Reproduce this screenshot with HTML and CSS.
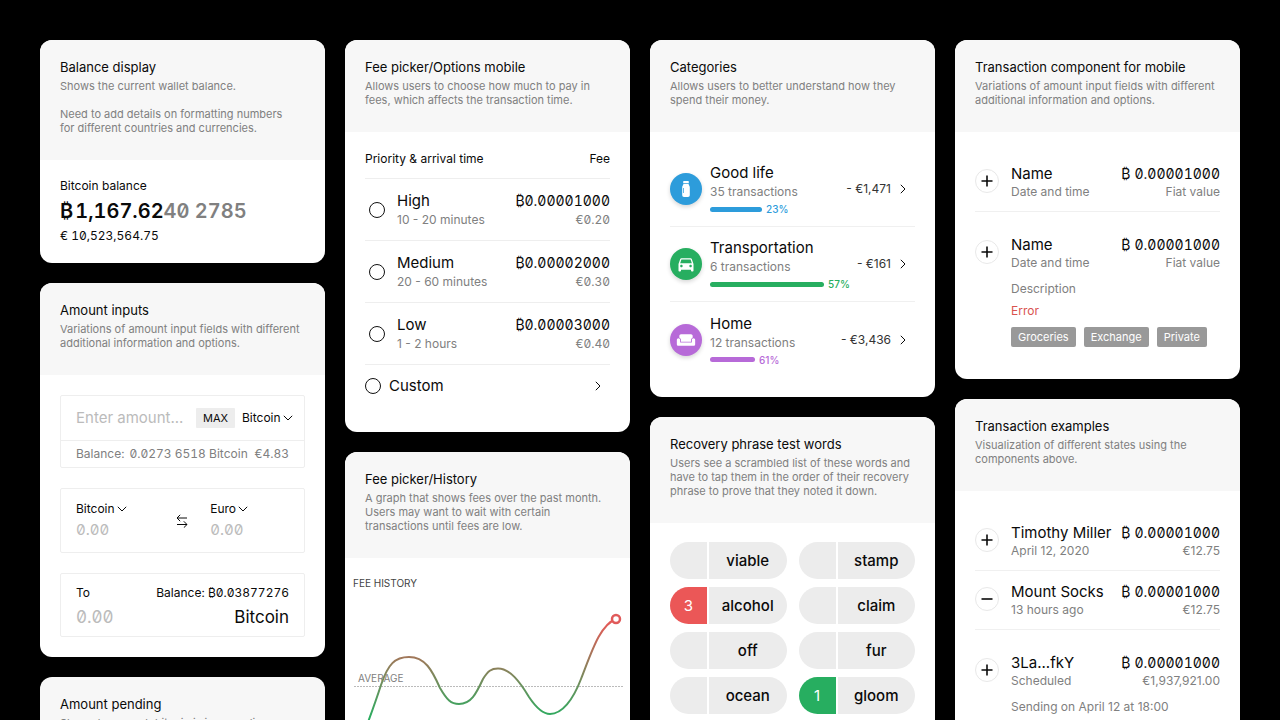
FILE: index.html
```html
<!DOCTYPE html>
<html lang="en">
<head>
<meta charset="utf-8">
<title>Wallet components</title>
<link rel="stylesheet" href="styles.css">
</head>
<body>
<svg class="sprite" aria-hidden="true">
  <symbol id="down" viewBox="0 0 10 6"><path d="M.8.8 5 5 9.2.8"/></symbol>
  <symbol id="next" viewBox="0 0 6 10"><path d="M.8.8 5 5 .8 9.2"/></symbol>
  <symbol id="plus" viewBox="0 0 12 12"><path d="M6 .5v11M.5 6h11"/></symbol>
  <symbol id="minus" viewBox="0 0 12 12"><path d="M.5 6h11"/></symbol>
</svg>
<main class="board">
  <div class="column">
    <section class="card">
      <header class="card-head">
        <h2>Balance display</h2>
        <p>Shows the current wallet balance.<br><br>Need to add details on formatting numbers<br>for different countries and currencies.</p>
      </header>
      <div class="balance">
        <div class="small">Bitcoin balance</div>
        <div class="total">₿<span class="total-main">1,167.62</span><span class="total-rest">40 2785</span></div>
        <div class="small num">€ 10,523,564.75</div>
      </div>
    </section>
    <section class="card">
      <header class="card-head">
        <h2>Amount inputs</h2>
        <p>Variations of amount input fields with different additional information and options.</p>
      </header>
      <div class="fields">
        <div class="field">
          <div class="field-entry">
            <input class="entry entry-wide" type="text" placeholder="Enter amount..." aria-label="Amount">
            <button class="max" type="button">MAX</button>
            <label class="picker"><select aria-label="Currency"><option>Bitcoin</option></select><svg class="icon down"><use href="#down"/></svg></label>
          </div>
          <div class="field-note num"><span>Balance:</span><span>0.0273 6518 Bitcoin</span><span class="end">€4.83</span></div>
        </div>
        <div class="field convert">
          <div class="side">
            <label class="picker"><select aria-label="From currency"><option>Bitcoin</option></select><svg class="icon down"><use href="#down"/></svg></label>
            <input class="entry num" type="text" placeholder="0.00" aria-label="From amount">
          </div>
          <button class="swap" type="button" aria-label="Swap currencies"><svg class="icon swap-icon" viewBox="0 0 12 14"><path d="M11 4H1M4.200.800 1 4l3.200 3.200M1 10.500h10M7.800 7.300 11 10.500 7.800 13.700"/></svg></button>
          <div class="side">
            <label class="picker"><select aria-label="To currency"><option>Euro</option></select><svg class="icon down"><use href="#down"/></svg></label>
            <input class="entry num" type="text" placeholder="0.00" aria-label="To amount">
          </div>
        </div>
        <div class="field send">
          <div class="line small"><label for="send-to">To</label><span class="num">Balance: ₿0.03877276</span></div>
          <div class="line large"><input id="send-to" class="entry large num" type="text" placeholder="0.00"><span>Bitcoin</span></div>
        </div>
      </div>
    </section>
    <section class="card">
      <header class="card-head">
        <h2>Amount pending</h2>
        <p>Shows how much bitcoin is in a pending transaction.</p>
      </header>
    </section>
  </div>

  <div class="column">
    <section class="card">
      <header class="card-head">
        <h2>Fee picker/Options mobile</h2>
        <p>Allows users to choose how much to pay in fees, which affects the transaction time.</p>
      </header>
      <div class="fees">
        <div class="fee-head small"><span>Priority &amp; arrival time</span><span>Fee</span></div>
        <label class="fee"><input type="radio" name="fee"><span class="pair"><b>High</b><i>10 - 20 minutes</i></span><span class="pair end num"><b>₿0.00001000</b><i>€0.20</i></span></label>
        <label class="fee"><input type="radio" name="fee"><span class="pair"><b>Medium</b><i>20 - 60 minutes</i></span><span class="pair end num"><b>₿0.00002000</b><i>€0.30</i></span></label>
        <label class="fee"><input type="radio" name="fee"><span class="pair"><b>Low</b><i>1 - 2 hours</i></span><span class="pair end num"><b>₿0.00003000</b><i>€0.40</i></span></label>
        <label class="fee-custom"><input type="radio" name="fee"><span>Custom</span><svg class="icon next end"><use href="#next"/></svg></label>
      </div>
    </section>
    <section class="card">
      <header class="card-head">
        <h2>Fee picker/History</h2>
        <p>A graph that shows fees over the past month. Users may want to wait with certain transactions until fees are low.</p>
      </header>
      <div class="history">
        <h3>FEE HISTORY</h3>
        <svg class="chart" viewBox="0 0 285 170" role="img" aria-label="Fee history">
          <defs><linearGradient id="heat" gradientUnits="userSpaceOnUse" x1="0" y1="27" x2="0" y2="128"><stop offset="0" stop-color="#eb5757"/><stop offset="1" stop-color="#27ae60"/></linearGradient></defs>
          <text x="13" y="90">AVERAGE</text>
          <path class="average" d="M9 94.500H278"/>
          <path class="curve" d="M10 166C17 145 26 124 36 93C43 72 50 65 64 65C80 65 87 78 95 96C102 108 106 112 114 112C126 112 131 102 138 87C143 79 146 76.500 153 76.500C165 76.500 175 90 184 105C192 117 198 122 205 122C217 122 228 108 236 87C247 59 255 33 271 27"/>
          <circle cx="271" cy="27" r="4"/>
        </svg>
      </div>
    </section>
  </div>

  <div class="column">
    <section class="card">
      <header class="card-head">
        <h2>Categories</h2>
        <p>Allows users to better understand how they spend their money.</p>
      </header>
      <div class="categories">
        <a class="category blue" href="#good-life">
          <span class="badge"><svg viewBox="0 0 20 20"><path d="M7.800 2h4.400a.6.6 0 0 1 .6.6v1.600H7.200V2.600a.6.6 0 0 1 .6-.6zM7.400 5h5.200c0 1.200 1.200 1.600 1.200 3.300v7.900a1.800 1.800 0 0 1-1.800 1.800H8a1.800 1.800 0 0 1-1.800-1.800V8.300C6.200 6.600 7.400 6.200 7.400 5zM7.200 9v5h.7V9z"/></svg></span>
          <span class="category-text"><b>Good life</b><i>35 transactions</i><span class="share"><span class="bar" style="width:52px"></span>23%</span></span>
          <span class="category-sum">- €1,471</span><svg class="icon next"><use href="#next"/></svg>
        </a>
        <a class="category green" href="#transportation">
          <span class="badge"><svg viewBox="0 0 24 24"><path d="M18.920 6.010C18.720 5.420 18.160 5 17.500 5h-11c-.66 0-1.210.42-1.420 1.010L3 12v8c0 .55.45 1 1 1h1c.55 0 1-.45 1-1v-1h12v1c0 .55.45 1 1 1h1c.55 0 1-.45 1-1v-8l-2.080-5.990zM6.500 16c-.83 0-1.500-.67-1.500-1.500S5.670 13 6.500 13s1.500.67 1.500 1.500S7.330 16 6.500 16zm11 0c-.83 0-1.500-.67-1.500-1.500s.67-1.500 1.500-1.500 1.500.67 1.500 1.500-.67 1.500-1.500 1.500zM5 11l1.500-4.500h11L19 11H5z"/></svg></span>
          <span class="category-text"><b>Transportation</b><i>6 transactions</i><span class="share"><span class="bar" style="width:114px"></span>57%</span></span>
          <span class="category-sum">- €161</span><svg class="icon next"><use href="#next"/></svg>
        </a>
        <a class="category purple" href="#home">
          <span class="badge"><svg viewBox="0 0 24 24"><path d="M21 10c-1.100 0-2 .9-2 2v3H5v-3c0-1.100-.9-2-2-2s-2 .9-2 2v5c0 1.100.9 2 2 2h18c1.100 0 2-.9 2-2v-5c0-1.100-.9-2-2-2zm-3-5H6c-1.100 0-2 .9-2 2v2.150c1.160.41 2 1.510 2 2.820V14h12v-2.030c0-1.300.84-2.400 2-2.820V7c0-1.100-.9-2-2-2z"/></svg></span>
          <span class="category-text"><b>Home</b><i>12 transactions</i><span class="share"><span class="bar" style="width:45px"></span>61%</span></span>
          <span class="category-sum">- €3,436</span><svg class="icon next"><use href="#next"/></svg>
        </a>
      </div>
    </section>
    <section class="card">
      <header class="card-head">
        <h2>Recovery phrase test words</h2>
        <p>Users see a scrambled list of these words and have to tap them in the order of their recovery phrase to prove that they noted it down.</p>
      </header>
      <div class="words">
        <button class="word" type="button"><span class="order"></span><span class="term">viable</span></button>
        <button class="word" type="button"><span class="order"></span><span class="term">stamp</span></button>
        <button class="word" type="button"><span class="order wrong">3</span><span class="term">alcohol</span></button>
        <button class="word" type="button"><span class="order"></span><span class="term">claim</span></button>
        <button class="word" type="button"><span class="order"></span><span class="term">off</span></button>
        <button class="word" type="button"><span class="order"></span><span class="term">fur</span></button>
        <button class="word" type="button"><span class="order"></span><span class="term">ocean</span></button>
        <button class="word" type="button"><span class="order right">1</span><span class="term">gloom</span></button>
      </div>
    </section>
  </div>

  <div class="column">
    <section class="card">
      <header class="card-head">
        <h2>Transaction component for mobile</h2>
        <p>Variations of amount input fields with different additional information and options.</p>
      </header>
      <div class="transactions">
        <article class="transaction">
          <span class="sign"><svg class="icon"><use href="#plus"/></svg></span>
          <div class="details">
            <div class="line"><b>Name</b><b class="coin">₿<span>0.00001000</span></b></div>
            <div class="line sub"><span>Date and time</span><span>Fiat value</span></div>
          </div>
        </article>
        <article class="transaction roomy">
          <span class="sign"><svg class="icon"><use href="#plus"/></svg></span>
          <div class="details">
            <div class="line"><b>Name</b><b class="coin">₿<span>0.00001000</span></b></div>
            <div class="line sub"><span>Date and time</span><span>Fiat value</span></div>
            <p class="note">Description</p>
            <p class="error">Error</p>
            <div class="tags"><span>Groceries</span><span>Exchange</span><span>Private</span></div>
          </div>
        </article>
      </div>
    </section>
    <section class="card">
      <header class="card-head">
        <h2>Transaction examples</h2>
        <p>Visualization of different states using the components above.</p>
      </header>
      <div class="transactions">
        <article class="transaction">
          <span class="sign"><svg class="icon"><use href="#plus"/></svg></span>
          <div class="details">
            <div class="line"><b>Timothy Miller</b><b class="coin">₿<span>0.00001000</span></b></div>
            <div class="line sub"><span>April 12, 2020</span><span>€12.75</span></div>
          </div>
        </article>
        <article class="transaction">
          <span class="sign"><svg class="icon"><use href="#minus"/></svg></span>
          <div class="details">
            <div class="line"><b>Mount Socks</b><b class="coin">₿<span>0.00001000</span></b></div>
            <div class="line sub"><span>13 hours ago</span><span>€12.75</span></div>
          </div>
        </article>
        <article class="transaction roomy">
          <span class="sign"><svg class="icon"><use href="#plus"/></svg></span>
          <div class="details">
            <div class="line"><b>3La...fkY</b><b class="coin">₿<span>0.00001000</span></b></div>
            <div class="line sub"><span>Scheduled</span><span>€1,937,921.00</span></div>
            <p class="note">Sending on April 12 at 18:00</p>
          </div>
        </article>
      </div>
    </section>
  </div>
</main>
</body>
</html>
```
FILE: styles.css
```css
* { box-sizing: border-box; }
body { margin: 0; background: #000; color: #0a0a0a; font: 12px/16px Inter, "Liberation Sans", sans-serif; }
h2, h3, p { margin: 0; font-weight: 400; }
b, i { font-weight: 400; font-style: normal; }
button, input, select { font: inherit; color: inherit; margin: 0; padding: 0; border: 0; background: none; }
a { color: inherit; text-decoration: none; }

.sprite { display: none; }
.icon { width: 12px; height: 12px; flex: none; fill: none; stroke: currentColor; stroke-width: 1; }
.icon.down { width: 10px; height: 6px; }
.icon.next { width: 6px; height: 10px; }
.num { font-feature-settings: "tnum", "zero"; }
.end { margin-left: auto; }
.small { font-size: 12px; line-height: 16px; }
.large { font-size: 17px; line-height: 24px; }

.board { display: grid; grid-template-columns: repeat(4, minmax(0, 1fr)); gap: 20px; height: 100vh; padding: 40px 40px 0; overflow: hidden; }
.column { display: flex; flex-direction: column; gap: 20px; }
.card { flex: none; background: #fff; border-radius: 12px; overflow: hidden; }
.card-head { padding: 17px 20px 25px; background: #f7f7f7; }
.card-head h2 { margin-bottom: 2px; font-size: 13px; line-height: 20px; }
.card-head p { font-size: 11px; line-height: 14px; color: #808080; }

.balance { padding: 18px 20px 19px; }
.total { display: flex; margin: 4px 0; font-size: 20px; line-height: 26px; font-weight: 600; font-feature-settings: "tnum", "zero"; }
.total-main { margin-left: 2px; }
.total-rest { color: #808080; }

.fields { display: grid; grid-template-columns: minmax(0, 1fr); gap: 20px; padding: 20px; }
.field { border: 1px solid #eee; border-radius: 2px; }
.field-entry { display: flex; align-items: center; height: 45px; padding: 0 11px 0 15px; border-bottom: 1px solid #eee; }
.entry { width: 64px; font-size: 15px; line-height: 20px; }
.entry::placeholder { color: #bbb; opacity: 1; }
.entry.large { font-size: 17px; line-height: 24px; }
.entry-wide { flex: 1; width: auto; min-width: 0; }
.max { width: 39px; height: 20px; margin-right: 7px; background: #ededed; border-radius: 1px; font-size: 11px; }
.picker { display: flex; align-items: center; gap: 2px; }
.picker select { appearance: none; font-size: 12px; line-height: 16px; }
.field-note { display: flex; gap: 5px; padding: 5px 15px; color: #808080; }
.convert { display: flex; align-items: center; padding: 12px 15px; }
.side { display: grid; flex: 1; gap: 3px; }
.swap { display: flex; flex: none; margin-right: 22px; }
.swap + .side { flex: none; width: 37%; }
.swap-icon { height: 14px; }
.send { padding: 11px 15px 7px; }
.line { display: flex; justify-content: space-between; }
.send .line + .line { margin-top: 4px; }

.fees { padding: 19px 20px 25px; }
.fee-head { display: flex; justify-content: space-between; height: 28px; border-bottom: 1px solid #eee; }
.fee { display: flex; align-items: center; height: 62px; border-bottom: 1px solid #eee; padding-left: 4px; }
.fees input { appearance: none; width: 16px; height: 16px; border: 1px solid #111; border-radius: 50%; }
.pair { display: grid; margin-left: 12px; }
.pair.end { margin-left: auto; text-align: right; }
.pair b { font-size: 15px; line-height: 20px; }
.pair.end b { font-size: 14px; }
.pair i { line-height: 18px; color: #808080; }
.fee-custom { display: flex; align-items: center; gap: 8px; height: 42px; padding-right: 9px; font-size: 15px; }

.history { padding: 16px 0 0; }
.history h3 { padding-left: 8px; font-size: 10px; line-height: 18px; color: #444; }
.chart { display: block; width: 100%; }
.chart text { font-size: 10px; fill: #808080; }
.average { stroke: #bbb; stroke-dasharray: 2 1; }
.curve { fill: none; stroke: url(#heat); stroke-width: 2; }
.chart circle { fill: #fff; stroke: #e05a5a; stroke-width: 2.5; }

.categories { padding: 20px; }
.category { display: flex; align-items: center; height: 75px; padding-right: 9px; border-bottom: 1px solid #f0f0f0; }
.category:last-child { border: 0; }
.badge { display: grid; place-items: center; width: 32px; height: 32px; border-radius: 50%; box-shadow: 0 2px 4px rgba(0, 0, 0, .16); }
.badge svg { width: 20px; height: 20px; fill: #fff; fill-rule: evenodd; }
.category-text { display: grid; margin-left: 8px; }
.category-text b { font-size: 15px; line-height: 20px; }
.category-text i { line-height: 18px; color: #808080; }
.share { display: flex; align-items: center; gap: 4px; margin-top: 2px; font-size: 10px; line-height: 12px; font-weight: 500; }
.bar { height: 5px; border-radius: 3px; }
.category-sum { margin: 0 9px 0 auto; color: #333; }
.blue .badge, .blue .bar { background: #2d9cdb; }
.blue .share { color: #2d9cdb; }
.green .badge, .green .bar { background: #27ae60; }
.green .share { color: #27ae60; }
.purple .badge, .purple .bar { background: #b76ad8; }
.purple .share { color: #b76ad8; }

.words { display: grid; grid-template-columns: 1fr 1fr; gap: 8px 12px; padding: 19px 20px 20px; }
.word { display: flex; gap: 2px; height: 37px; border-radius: 19px; overflow: hidden; }
.order, .term { display: grid; place-items: center; height: 100%; background: #ececec; font-size: 15px; }
.order { width: 37px; }
.term { flex: 1; font-weight: 500; }
.wrong { background: #eb5757; color: #fff; }
.right { background: #27ae60; color: #fff; }

.transactions { padding: 21px 20px 32px; }
.transaction { display: flex; align-items: flex-start; gap: 12px; padding: 12px 0 10px; border-bottom: 1px solid #f0f0f0; }
.transaction.roomy { padding: 24px 0 0; }
.transaction:last-child { border: 0; }
.sign { display: grid; place-items: center; flex: none; width: 24px; height: 24px; margin-top: 4px; border: 1px solid #e8e8e8; border-radius: 50%; }
.sign .icon { stroke-width: 1.6; }
.details { flex: 1; }
.details b { font-size: 15px; line-height: 18px; }
.details .coin { display: flex; gap: 4px; font-size: 14px; font-feature-settings: "tnum", "zero"; }
.sub, .note, .error { line-height: 18px; color: #808080; }
.note { margin-top: 8px; }
.error { margin-top: 4px; color: #d9534f; }
.tags { display: flex; gap: 8px; margin-top: 7px; }
.tags span { padding: 0 7px; border-radius: 2px; background: #999; color: #fff; font-size: 11px; line-height: 20px; }
```
